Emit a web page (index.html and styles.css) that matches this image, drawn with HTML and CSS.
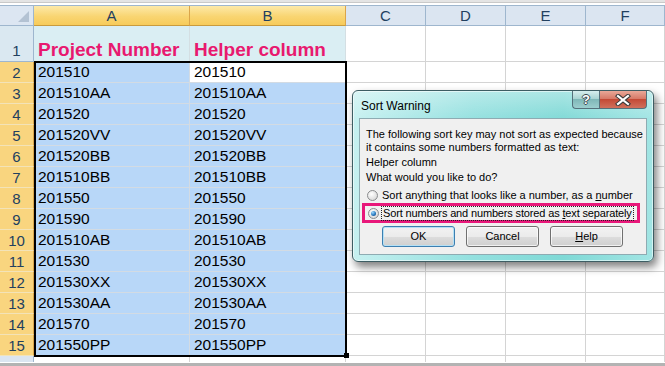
FILE: index.html
```html
<!DOCTYPE html>
<html>
<head>
<meta charset="utf-8">
<link rel="stylesheet" href="styles.css">
</head>
<body>
<div class="app">
  <div class="topbar"></div>
  <div class="sheet">
    <div class="corner"><span class="tri"></span></div>
    <div class="ch sel">A</div><div class="ch sel">B</div><div class="ch">C</div><div class="ch">D</div><div class="ch">E</div><div class="ch">F</div>

    <div class="rh r1">1</div><div class="c hd">Project Number</div><div class="c hd">Helper column</div><div class="c"></div><div class="c"></div><div class="c"></div><div class="c"></div>

    <div class="rh sel">2</div><div class="c s">201510</div><div class="c s active">201510</div><div class="c"></div><div class="c"></div><div class="c"></div><div class="c"></div>
    <div class="rh sel">3</div><div class="c s">201510AA</div><div class="c s">201510AA</div><div class="c"></div><div class="c"></div><div class="c"></div><div class="c"></div>
    <div class="rh sel">4</div><div class="c s">201520</div><div class="c s">201520</div><div class="c"></div><div class="c"></div><div class="c"></div><div class="c"></div>
    <div class="rh sel">5</div><div class="c s">201520VV</div><div class="c s">201520VV</div><div class="c"></div><div class="c"></div><div class="c"></div><div class="c"></div>
    <div class="rh sel">6</div><div class="c s">201520BB</div><div class="c s">201520BB</div><div class="c"></div><div class="c"></div><div class="c"></div><div class="c"></div>
    <div class="rh sel">7</div><div class="c s">201510BB</div><div class="c s">201510BB</div><div class="c"></div><div class="c"></div><div class="c"></div><div class="c"></div>
    <div class="rh sel">8</div><div class="c s">201550</div><div class="c s">201550</div><div class="c"></div><div class="c"></div><div class="c"></div><div class="c"></div>
    <div class="rh sel">9</div><div class="c s">201590</div><div class="c s">201590</div><div class="c"></div><div class="c"></div><div class="c"></div><div class="c"></div>
    <div class="rh sel">10</div><div class="c s">201510AB</div><div class="c s">201510AB</div><div class="c"></div><div class="c"></div><div class="c"></div><div class="c"></div>
    <div class="rh sel">11</div><div class="c s">201530</div><div class="c s">201530</div><div class="c"></div><div class="c"></div><div class="c"></div><div class="c"></div>
    <div class="rh sel">12</div><div class="c s">201530XX</div><div class="c s">201530XX</div><div class="c"></div><div class="c"></div><div class="c"></div><div class="c"></div>
    <div class="rh sel">13</div><div class="c s">201530AA</div><div class="c s">201530AA</div><div class="c"></div><div class="c"></div><div class="c"></div><div class="c"></div>
    <div class="rh sel">14</div><div class="c s">201570</div><div class="c s">201570</div><div class="c"></div><div class="c"></div><div class="c"></div><div class="c"></div>
    <div class="rh sel">15</div><div class="c s">201550PP</div><div class="c s">201550PP</div><div class="c"></div><div class="c"></div><div class="c"></div><div class="c"></div>

    <div class="rh r16">16</div><div class="c"></div><div class="c"></div><div class="c"></div><div class="c"></div><div class="c"></div><div class="c"></div>
  </div>
  <div class="bottombar"></div>

  <div class="selection"><span class="handle"></span></div>

  <div class="dialog">
    <div class="titlebar">
      <div class="title">Sort Warning</div>
      <div class="tbtns">
        <div class="qbtn">?</div>
        <div class="xbtn">
          <svg width="16" height="12" viewBox="0 0 16 12">
            <path d="M3 2 L13 10 M13 2 L3 10" stroke="#3a3a3a" stroke-width="4.2" stroke-linecap="square"/>
            <path d="M3 2 L13 10 M13 2 L3 10" stroke="#ffffff" stroke-width="2.2" stroke-linecap="square"/>
          </svg>
        </div>
      </div>
    </div>
    <div class="panel">
      <div class="intro">The following sort key may not sort as expected because<br>it contains some numbers formatted as text:</div>
      <div class="line helper">Helper column</div>
      <div class="line">What would you like to do?</div>
      <div class="radio r-first"><span class="dot"></span><span class="label">Sort anything that looks like a number, as a <u>n</u>umber</span></div>
      <div class="pinkbox">
        <div class="radio"><span class="dot on"></span><span class="label focus">Sort numbers and numbers stored as <u>t</u>ext separately</span></div>
      </div>
      <div class="buttons">
        <div class="btn def">OK</div>
        <div class="btn">Cancel</div>
        <div class="btn"><u>H</u>elp</div>
      </div>
    </div>
  </div>
</div>
</body>
</html>
```
FILE: styles.css
```css
html, body {
  margin: 0;
  padding: 0;
  background: #ffffff;
}
body {
  width: 665px;
  height: 366px;
  overflow: hidden;
  font-family: "Liberation Sans", Arial, sans-serif;
}
.app {
  position: relative;
  width: 665px;
  height: 366px;
  overflow: hidden;
}
.topbar {
  height: 6px;
  background: linear-gradient(#e4e4e4 0 2px, #c9c9c9 2px 3px, #ffffff 3px 5px, #9eb6ce 5px 6px);
}
.sheet {
  display: grid;
  grid-template-columns: 34px 156px 156px 80px 80px 80px 79px;
  grid-template-rows: 20px 36px repeat(14, 21px) 6px;
}
.sheet > div {
  box-sizing: border-box;
  overflow: hidden;
  white-space: nowrap;
}
.corner {
  position: relative;
  background: #dce6f2;
  border-right: 1px solid #9eb6ce;
  border-bottom: 1px solid #9eb6ce;
}
.tri {
  position: absolute;
  right: 4px;
  bottom: 3px;
  width: 0;
  height: 0;
  border-left: 11px solid transparent;
  border-bottom: 11px solid #b3c2d3;
}
.ch {
  background: #dbe5f1;
  border-right: 1px solid #9eb6ce;
  border-bottom: 1px solid #9eb6ce;
  color: #22405f;
  font-size: 15px;
  line-height: 19px;
  text-align: center;
}
.ch.sel {
  background: linear-gradient(#fde9a8, #f9d572 55%, #f7cb5a);
  border-right-color: #dba54a;
  border-bottom-color: #c99b3d;
}
.rh {
  display: flex;
  align-items: center;
  justify-content: center;
  background: #dbe5f1;
  border-right: 1px solid #9eb6ce;
  border-bottom: 1px solid #9eb6ce;
  color: #22405f;
  font-size: 15px;
}
.rh.r1 {
  align-items: flex-end;
  padding-bottom: 2px;
  background: #dae8f1;
}
.rh.sel {
  background: #f9d57f;
  border-bottom-color: #f3e3b8;
  border-right-color: #d9a449;
}
.rh.r16 {
  align-items: flex-start;
  padding-top: 2px;
  border-bottom: none;
}
.c {
  border-right: 1px solid #d4d4d4;
  border-bottom: 1px solid #d4d4d4;
  font-size: 15.5px;
  line-height: 20px;
  padding-left: 4px;
  color: #000;
}
.c.hd {
  display: flex;
  align-items: flex-end;
  background: #daeef3;
  color: #e8196f;
  font-weight: bold;
  font-size: 19px;
  line-height: 22px;
  padding-bottom: 1px;
  border-right-color: #d4dfe3;
  border-bottom: none;
}
.c.s {
  background: #b8d7f8;
  border-right-color: #d3dbe3;
  border-bottom-color: #d3dbe3;
}
.c.s.active {
  background: #ffffff;
}
.sheet > .c:nth-last-child(-n+6) {
  border-bottom: none;
}
.bottombar {
  height: 4px;
  background: linear-gradient(#ffffff 0 1px, #b3b3b3 1px);
}
.selection {
  position: absolute;
  left: 34px;
  top: 61px;
  width: 313px;
  height: 296px;
  box-sizing: border-box;
  border: 2px solid #000;
}
.handle {
  position: absolute;
  right: -4px;
  bottom: -3px;
  width: 5px;
  height: 5px;
  background: #000;
}

/* dialog */
.dialog {
  position: absolute;
  left: 352px;
  top: 90px;
  width: 302px;
  height: 172px;
  box-sizing: border-box;
  border: 1px solid #3d5d63;
  border-radius: 6px;
  padding: 0 6px 6px 6px;
  display: flex;
  flex-direction: column;
  background:
    linear-gradient(rgba(255,255,255,0.35), rgba(255,255,255,0) 30px),
    linear-gradient(to right, #c6f0f0 0%, #93e0df 40%, #7fd9d6 70%, #a2e5e4 100%);
  box-shadow: inset 0 0 0 1px rgba(255,255,255,0.55), 3px 5px 9px rgba(0,0,0,0.5);
}
.titlebar {
  height: 27px;
  display: flex;
  justify-content: space-between;
  align-items: flex-start;
}
.title {
  font-size: 12px;
  line-height: 14px;
  padding-top: 8px;
  margin-left: 2px;
  color: #000;
}
.tbtns {
  display: flex;
  height: 18px;
}
.qbtn {
  width: 27px;
  height: 18px;
  box-sizing: border-box;
  border: 1px solid #55707a;
  border-top: none;
  border-right: none;
  border-radius: 0 0 0 4px;
  background: linear-gradient(#d6eeee 0%, #a9d4d3 45%, #7fb8b8 50%, #9ccece 100%);
  color: #fff;
  font-weight: bold;
  font-size: 13px;
  line-height: 17px;
  text-align: center;
  text-shadow: 1px 0 0 #3a4a50, -1px 0 0 #3a4a50, 0 1px 0 #3a4a50, 0 -1px 0 #3a4a50;
}
.xbtn {
  width: 48px;
  height: 18px;
  box-sizing: border-box;
  border: 1px solid #55707a;
  border-top: none;
  border-radius: 0 0 4px 0;
  background: linear-gradient(#e9a898 0%, #d77a68 45%, #c44a36 50%, #d0705c 100%);
  display: flex;
  align-items: center;
  justify-content: center;
}
.panel {
  flex: 1;
  background: #f0f0f0;
  border: 1px solid #8eabb2;
  font-size: 11px;
  color: #000;
  padding-top: 9px;
}
.intro {
  margin-left: 6px;
  line-height: 13px;
  white-space: nowrap;
}
.line {
  margin-left: 6px;
  line-height: 15px;
  white-space: nowrap;
}
.helper {
  margin-top: 1px;
}
.radio {
  display: flex;
  align-items: center;
  height: 16px;
  white-space: nowrap;
}
.r-first {
  margin-top: 2px;
  margin-left: 7px;
}
.label {
  flex: none;
  white-space: nowrap;
}
.dot {
  position: relative;
  width: 11px;
  height: 11px;
  box-sizing: border-box;
  border-radius: 50%;
  border: 1px solid #8a8c8e;
  background: radial-gradient(circle at 40% 35%, #ffffff, #e2e2e2 60%, #cfcfcf);
  margin-right: 4px;
  flex: none;
}
.dot.on::after {
  content: "";
  position: absolute;
  left: 2px;
  top: 2px;
  width: 5px;
  height: 5px;
  border-radius: 50%;
  background: radial-gradient(circle at 35% 30%, #9ad8ff, #2a7ac0 55%, #0b3d70);
}
.pinkbox {
  margin-left: 2px;
  width: 278px;
  height: 20px;
  box-sizing: border-box;
  border: 3px solid #e8177a;
  padding-left: 3px;
  display: flex;
  align-items: center;
}
.pinkbox .radio {
  height: 14px;
}
.pinkbox .dot {
  margin-right: 3px;
}
.label.focus {
  outline: 1px dotted #222;
  outline-offset: 0;
  line-height: 13px;
  padding: 0 1px;
  letter-spacing: -0.15px;
}
.buttons {
  display: flex;
  gap: 11px;
  margin-top: 3px;
  margin-left: 22px;
}
.btn {
  width: 73px;
  height: 21px;
  box-sizing: border-box;
  border: 1px solid #707070;
  border-radius: 3px;
  background: linear-gradient(#f2f2f2 0%, #ebebeb 50%, #dddddd 50%, #cfcfcf 100%);
  font-size: 11px;
  line-height: 19px;
  text-align: center;
  box-shadow: inset 0 0 0 1px rgba(255,255,255,0.7);
}
.btn.def {
  border-color: #3c7fb1;
  box-shadow: inset 0 0 0 1px #b5e0f5;
}
```
